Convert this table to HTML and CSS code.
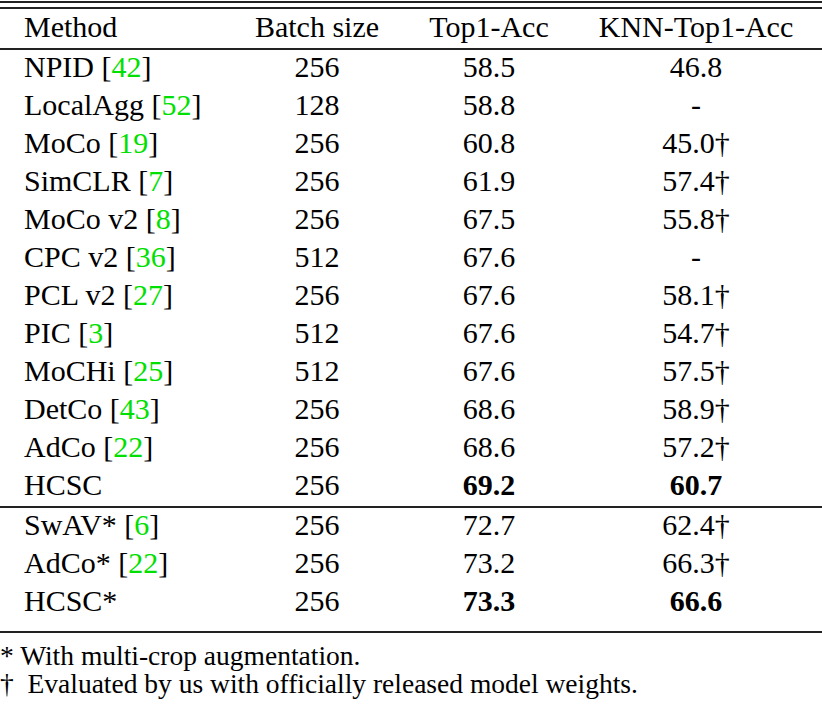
FILE: index.html
```html
<!DOCTYPE html>
<html>
<head>
<meta charset="utf-8">
<link rel="stylesheet" href="styles.css">
</head>
<body>
<div class="table">
  <div class="rule rule-top1"></div>
  <div class="rule rule-top2"></div>
  <div class="row head"><span class="c1">Method</span><span>Batch size</span><span>Top1-Acc</span><span>KNN-Top1-Acc</span></div>
  <div class="rule"></div>
  <div class="row"><span class="c1">NPID [<span class="ref">42</span>]</span><span>256</span><span>58.5</span><span>46.8</span></div>
  <div class="row"><span class="c1">LocalAgg [<span class="ref">52</span>]</span><span>128</span><span>58.8</span><span>-</span></div>
  <div class="row"><span class="c1">MoCo [<span class="ref">19</span>]</span><span>256</span><span>60.8</span><span>45.0†</span></div>
  <div class="row"><span class="c1">SimCLR [<span class="ref">7</span>]</span><span>256</span><span>61.9</span><span>57.4†</span></div>
  <div class="row"><span class="c1">MoCo v2 [<span class="ref">8</span>]</span><span>256</span><span>67.5</span><span>55.8†</span></div>
  <div class="row"><span class="c1">CPC v2 [<span class="ref">36</span>]</span><span>512</span><span>67.6</span><span>-</span></div>
  <div class="row"><span class="c1">PCL v2 [<span class="ref">27</span>]</span><span>256</span><span>67.6</span><span>58.1†</span></div>
  <div class="row"><span class="c1">PIC [<span class="ref">3</span>]</span><span>512</span><span>67.6</span><span>54.7†</span></div>
  <div class="row"><span class="c1">MoCHi [<span class="ref">25</span>]</span><span>512</span><span>67.6</span><span>57.5†</span></div>
  <div class="row"><span class="c1">DetCo [<span class="ref">43</span>]</span><span>256</span><span>68.6</span><span>58.9†</span></div>
  <div class="row"><span class="c1">AdCo [<span class="ref">22</span>]</span><span>256</span><span>68.6</span><span>57.2†</span></div>
  <div class="row"><span class="c1">HCSC</span><span>256</span><span class="b">69.2</span><span class="b">60.7</span></div>
  <div class="rule"></div>
  <div class="row"><span class="c1">SwAV* [<span class="ref">6</span>]</span><span>256</span><span>72.7</span><span>62.4†</span></div>
  <div class="row"><span class="c1">AdCo* [<span class="ref">22</span>]</span><span>256</span><span>73.2</span><span>66.3†</span></div>
  <div class="row"><span class="c1">HCSC*</span><span>256</span><span class="b">73.3</span><span class="b">66.6</span></div>
  <div class="rule rule-bottom"></div>
</div>
<div class="notes">
  <p class="note">* With multi-crop augmentation.</p>
  <p class="note">†&nbsp; Evaluated by us with officially released model weights.</p>
</div>
</body>
</html>
```
FILE: styles.css
```css
html, body {
  margin: 0;
  padding: 0;
  background: #ffffff;
}
body {
  width: 822px;
  height: 705px;
  overflow: hidden;
  font-family: "Liberation Serif", "Times New Roman", serif;
  color: #000;
}
.table {
  width: 822px;
}
.rule {
  height: 2px;
  background: #222;
}
.rule-top1 {
  margin-top: 1px;
}
.rule-top2 {
  margin-top: 4px;
}
.rule-bottom {
  margin-top: 9px;
}
.row {
  display: grid;
  grid-template-columns: 250px 134px 210px 204px;
  padding-right: 24px;
  font-size: 30px;
  line-height: 34px;
  height: 34px;
  padding-bottom: 4px;
  text-align: center;
  white-space: nowrap;
}
.row.head {
  padding-top: 1px;
}
.c1 {
  text-align: left;
  padding-left: 24px;
}
.ref {
  color: #00e000;
}
.b {
  font-weight: bold;
}
.notes {
  margin-top: 9px;
}
.note {
  margin: 0;
  font-size: 27.5px;
  line-height: 28px;
  white-space: nowrap;
}
```
